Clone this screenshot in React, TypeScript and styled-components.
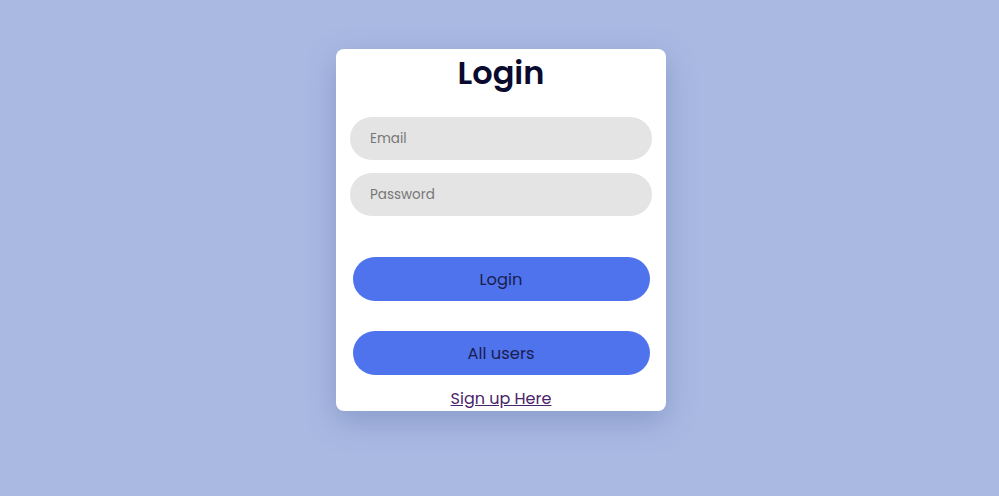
import { createGlobalStyle, styled } from 'styled-components';

const GlobalStyle = createGlobalStyle`
  html, body {
    margin: 0;
    padding: 0;
    height: 100%;
    background: #a9b9e2;
    font-family: Poppins, "Open Sans", "Noto Sans", sans-serif;
  }
`;

const Page = styled.div`
  display: flex;
  justify-content: center;
  padding: 49px 0 0 3px;
  min-height: 496px;
  box-sizing: border-box;
`;

const Card = styled.form`
  width: 330px;
  height: 362px;
  box-sizing: border-box;
  background: #fff;
  border-radius: 8px;
  box-shadow: 0 10px 30px rgba(80, 100, 160, 0.35);
  display: flex;
  flex-direction: column;
  align-items: center;
  overflow: hidden;
`;

const Title = styled.h1`
  margin: 0;
  line-height: 48px;
  font-size: 32px;
  font-weight: 600;
  color: #0a0a2e;
`;

const Input = styled.input<{ $gap: number }>`
  width: 302px;
  height: 43px;
  margin-top: ${(p) => p.$gap}px;
  box-sizing: border-box;
  border: none;
  outline: none;
  border-radius: 22px;
  background: #e4e4e4;
  padding: 0 20px;
  font-family: inherit;
  font-size: 13.5px;
  color: #333;

  &::placeholder {
    color: #777;
  }
`;

const Button = styled.button<{ $gap: number }>`
  width: 297px;
  height: 44px;
  margin-top: ${(p) => p.$gap}px;
  border: none;
  border-radius: 22px;
  background: #4e73ed;
  color: #1a1d4e;
  font-family: inherit;
  font-size: 16.3px;
  cursor: pointer;
`;

const SignUp = styled.a`
  margin-top: 13px;
  line-height: 22px;
  font-size: 16px;
  color: #4a2468;
  text-decoration: underline;
`;

export default function App() {
  return (
    <>
      <GlobalStyle />
      <Page>
        <Card onSubmit={(e) => e.preventDefault()}>
          <Title>Login</Title>
          <Input $gap={20} type="email" placeholder="Email" />
          <Input $gap={13} type="password" placeholder="Password" />
          <Button $gap={41} type="submit">
            Login
          </Button>
          <Button $gap={30} type="button">
            All users
          </Button>
          <SignUp href="#">Sign up Here</SignUp>
        </Card>
      </Page>
    </>
  );
}
